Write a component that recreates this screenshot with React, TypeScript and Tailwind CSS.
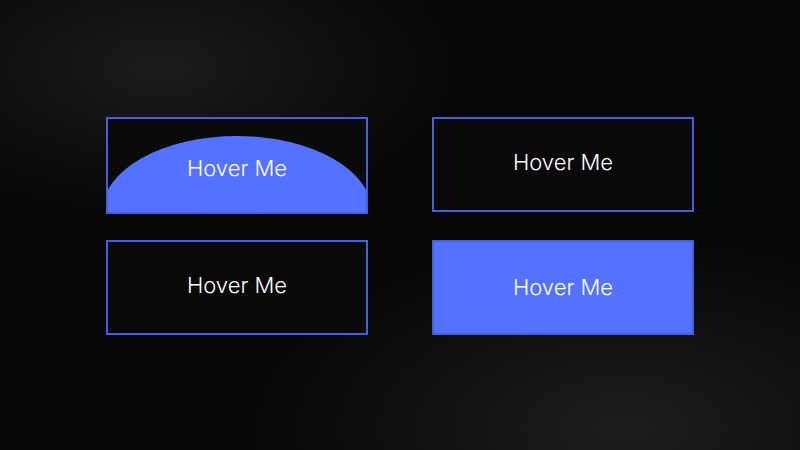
import type { ReactNode } from "react";

type TileProps = {
  children: ReactNode;
  variant?: "outline" | "filled" | "dome";
  className?: string;
};

function HoverTile({ children, variant = "outline", className = "" }: TileProps) {
  const base =
    "relative flex h-[95px] w-[262px] items-center justify-center overflow-hidden border-2 border-[#4660d8] text-[22px] font-light text-white";
  const fill = variant === "filled" ? "bg-[#5472ff] border-[#4f6cf5]" : "bg-[#0a0a0a]";

  return (
    <div className={`${base} ${fill} ${className}`}>
      {variant === "dome" ? (
        // half-ellipse rising from the bottom edge
        <span className="absolute bottom-[-76px] left-1/2 h-[152px] w-[270px] -translate-x-1/2 rounded-[50%] bg-[#5472ff]" />
      ) : null}
      <span className="relative">{children}</span>
    </div>
  );
}

export default function App() {
  return (
    <div
      className="flex h-[450px] w-[800px] items-start justify-center bg-[#060606] bg-[radial-gradient(ellipse_40%_35%_at_20%_15%,#1c1c1c_0%,#0f0f0f_55%,transparent_100%),radial-gradient(ellipse_50%_45%_at_78%_95%,#1e1e1e_0%,#101010_55%,transparent_100%)] pt-[117px]"
      style={{ fontFamily: "Inter, 'Noto Sans', sans-serif" }}
    >
      <div className="grid grid-cols-[262px_262px] gap-x-[64px] gap-y-[26px]">
        <HoverTile variant="dome" className="!h-[97px] pt-[6px]">
          Hover Me
        </HoverTile>
        <HoverTile className="pb-[4px]">Hover Me</HoverTile>
        <HoverTile className="pb-[5px]">Hover Me</HoverTile>
        <HoverTile variant="filled">Hover Me</HoverTile>
      </div>
    </div>
  );
}
